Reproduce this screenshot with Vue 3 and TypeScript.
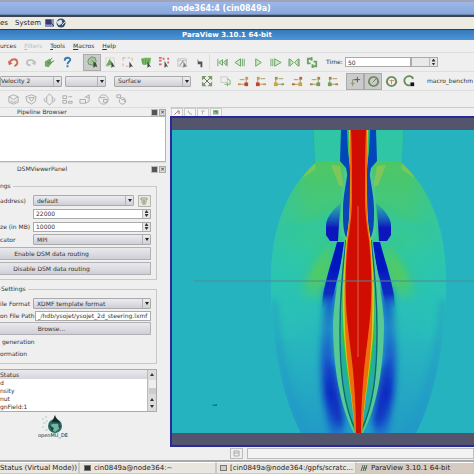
<script setup lang="ts">
import { ref } from 'vue'

interface Shape { d: string; f?: string; s?: string; w?: number }
interface Tool { name: string; shapes: Shape[]; on?: boolean; gap?: boolean }

const green = '#69a463'
const grey = '#aaaaaa'
const dark = '#444444'

const mainTools: Tool[] = [
  { name: 'Undo', shapes: [{ d: 'M3 8C3 3 10 2 11 6c1 3-1 4-3 5', s: '#d0694c', w: 2 }, { d: 'M1 5l1 5 4-2z', f: '#d0694c' }] },
  { name: 'Redo', shapes: [{ d: 'M10 8C10 3 3 3 2 7c0 2 2 3 4 3', s: '#bcc2bc', w: 2 }, { d: 'M12 5l-1 5-4-2z', f: '#bcc2bc' }] },
  { name: 'Connect', shapes: [{ d: 'M2 6l5-3 3 4-4 5-4-1z', f: '#74a868' }, { d: 'M7 5l3-3M9 7l3-2M5 7l3 1', s: '#4d8445' }] },
  { name: 'Help', shapes: [{ d: 'M4 5c0-4 6-4 6-1 0 2-3 2-3 5M7 10v2', s: '#3a7aab', w: 2 }] },
  { name: 'Find', on: true, gap: true, shapes: [{ d: 'M3 3l3-2 4 1 1 4-3 4-5-1-1-3z', f: '#a5c89d', s: '#5f9a5a' }, { d: 'M6 4l2 3', s: '#5f9a5a' }, { d: 'M8 6v7l2-2 2 1-1-4z', f: dark }] },
  { name: 'Select surface', shapes: [{ d: 'M2 2h9v9h-9z', s: '#d4d8cf' }, { d: 'M2 11l4-8 4 6z', f: '#72a960' }, { d: 'M8 6v7l2-2 2 1z', f: dark }] },
  { name: 'Select points', shapes: [{ d: 'M1 2h3M6 2h3M1 2v3M1 8v3M4 11h3M11 2v3', s: '#d5a99b' }, { d: 'M8 6v7l2-2 2 1z', f: dark }] },
  { name: 'Select through', shapes: [{ d: 'M1 3l4-1 7 0-1 6-7 2-2-3z', f: '#77b866' }, { d: 'M3 3v6M6 3v6M9 3v5', s: '#4f994a' }, { d: 'M8 6v7l2-2 2 1z', f: dark }] },
  { name: 'Select frustum points', shapes: [{ d: 'M1 2h3M1 5h3M1 9h3M5 3h2M11 2v2M11 6v2', s: '#d76b70', w: 2 }, { d: 'M7 5v8l2-2 2 1z', f: '#555' }] },
  { name: 'Select block', shapes: [{ d: 'M2 3h9v8H2zM2 5h9', s: '#bdc3bd' }, { d: 'M4 10l4-5', s: '#777' }, { d: 'M8 6v7l2-2 2 1z', f: '#777' }] },
  { name: 'Interact', shapes: [{ d: 'M4 3l1 3 4 0 0 6-2 0 0-3-3 0z', f: '#555' }] },
]

const play: Tool[] = [
  { name: 'First frame', shapes: [{ d: 'M2 3v8M12 3v8M3 7l4-3v6zM8 7l3-3v6z', s: green, f: '#cfe6c7' }] },
  { name: 'Previous frame', shapes: [{ d: 'M1 7l6-4v8zM9 3v8M11 3v8', s: green, f: '#cfe6c7' }] },
  { name: 'Play', shapes: [{ d: 'M4 3l6 4-6 4z', s: green, f: '#cfe6c7' }] },
  { name: 'Next frame', shapes: [{ d: 'M5 3l7 4-7 4zM3 3v8M1 3v8', s: green, f: '#cfe6c7' }] },
  { name: 'Last frame', shapes: [{ d: 'M2 3l4 4-4 4zM11 3l-4 4 4 4zM12 3v8M1 3v8', s: green, f: '#cfe6c7' }] },
  { name: 'Loop', shapes: [{ d: 'M5 3H2v5h3M8 11h3V6H8M6 1v4M7 9v4', s: green, w: 2 }] },
]

function axis(a: string, b: string, flip: boolean): Shape[] {
  return flip
    ? [{ d: 'M3 4v6h7M6 4h5', s: '#a29a5f' }, { d: 'M1 8h4v4H1z', f: b }, { d: 'M2 2h3v3H2z', f: a }, { d: 'M9 9h3v2H9z', f: a }]
    : [{ d: 'M10 3v7H3M3 5h5', s: '#a29a5f' }, { d: 'M8 8h4v4H8z', f: b }, { d: 'M9 2h3v3H9z', f: a }, { d: 'M1 9h3v2H1z', f: a }]
}

const camera: Tool[] = [
  { name: 'Reset camera', shapes: [{ d: 'M2 2l9 9M11 2l-9 9', s: '#666' }, { d: 'M1 1h5L1 6zM12 1v5L7 1zM1 12V7l5 5zM12 12H7l5-5z', f: '#7c9b61' }] },
  { name: 'Zoom to box', shapes: [{ d: 'M2 2h7v6H2z', s: '#c5cdc1' }, { d: 'M9 4l3 2v4H6M9 8v4', s: '#6eb466' }] },
  { name: 'View +X', shapes: axis('#c99a48', '#c4452c', false) },
  { name: 'View -X', shapes: axis('#c99a48', '#c4452c', true) },
  { name: 'View +Y', shapes: axis('#7fa44c', '#c8a63e', true) },
  { name: 'View -Y', shapes: axis('#c65e38', '#c8a63e', false) },
  { name: 'View +Z', shapes: axis('#b5803c', '#6f9f50', false) },
  { name: 'View -Z', shapes: axis('#b5803c', '#6f9f50', true) },
]

const centre: Tool[] = [
  { name: 'Orientation axes', on: true, shapes: [{ d: 'M4 12V5h5M2 9h4', s: '#8d925c' }, { d: 'M9 2v6M6 5h6', s: '#555' }] },
  { name: 'Rotation centre', on: true, shapes: [{ d: 'M7 2a5 5 0 1 0 .1 0', s: '#718c60', w: 2 }, { d: 'M6 8l4-4', s: '#62804f' }] },
  { name: 'Reset centre', shapes: [{ d: 'M7 2a5 5 0 1 0 .1 0', s: '#6c8958', w: 2 }, { d: 'M5 6h5M7 5v5', s: '#b3955b' }] },
  { name: 'Pick centre', shapes: [{ d: 'M11 4a5 5 0 1 0-3 7', s: '#688e54', w: 2 }, { d: 'M8 8h4v4H8z', f: '#111' }] },
]

const filters: Tool[] = [
  { name: 'Contour', shapes: [{ d: 'M2 4l5-2 5 2v6l-5 2-5-2zM2 4l5 3 5-3M4 8a3 2 0 0 0 6 0', s: grey }] },
  { name: 'Clip', shapes: [{ d: 'M1 4l6-2 5 2-1 5-4 3-5-3zM4 5l3 4 3-4z', s: grey }] },
  { name: 'Slice', shapes: [{ d: 'M7 1l3 3v6l-3 3-3-3V4zM3 5L1 7l2 3M11 5l2 2-2 3', s: grey }] },
  { name: 'Threshold', shapes: [{ d: 'M2 3h4v3H2zM2 8h4v3H2zM8 4h4M8 9h4v2H8z', s: grey }] },
  { name: 'Extract subset', shapes: [{ d: 'M1 7h6v4H1zM6 5l5-3v7l-4 2M8 5h3', s: grey }] },
  { name: 'Glyph', shapes: [{ d: 'M7 2a5 5 0 1 0 .1 0M3 5h6M7 7h4v3H7z', s: grey }] },
  { name: 'Stream tracer', shapes: [{ d: 'M2 2h4v3H2zM8 5a3.500 3.500 0 1 0 .1 0M7 7h3v3', s: grey }] },
]

const tabs: Tool[] = [
  { name: 'Edit view', shapes: [{ d: 'M2 11l4-4 5-4v7', s: '#a0705f', w: 2 }] },
  { name: 'Camera', shapes: [{ d: 'M3 3l2 5 6 3', s: '#b4aaa4', w: 2 }] },
  { name: 'Split view', shapes: [{ d: 'M3 4h8M6 4v7', s: '#b0b4a6', w: 2 }] },
  { name: '3D view', shapes: [{ d: 'M1 2h11v9H1z', f: '#8fb48a' }, { d: 'M4 5h5v4', s: '#557f54', w: 2 }] },
]

const address = ref('default')
const port = ref('22000')
const size = ref('10000')
const comm = ref('MPI')
const format = ref('XDMF template format')
const path = ref('_/hdb/ysojet/ysojet_2d_steering.lxmf')
const time = ref('50')
const statusRows = ['d', 'nsity', 'nut', 'gnField:1']
</script>

<template>
  <div class="desktop">
    <div class="strip"></div>
    <header class="vnc-title">node364:4 (cin0849a)</header>
    <nav class="gnome">
      <a href="#">es</a><a href="#">System</a>
      <svg class="tray" viewBox="0 0 24 10" aria-hidden="true">
        <path d="M1 1h9v8H1z" fill="#8d95c2" /><path d="M2 2h5v4H2zM6 4l4 4" fill="#363c69" stroke="#363c69" />
        <circle cx="17" cy="5" r="4.500" fill="#39506f" /><path d="M13 4l4-2 1 3-3 2zM18 7l3-3" fill="#dce5f3" stroke="#dce5f3" />
      </svg>
    </nav>
    <header class="pv-title">ParaView 3.10.1 64-bit</header>
    <nav class="menu">
      <a href="#">urces</a><a href="#" class="off"><u>F</u>ilters</a><a href="#"><u>T</u>ools</a><a href="#"><u>M</u>acros</a><a href="#"><u>H</u>elp</a>
    </nav>

    <div class="bar first">
      <button v-for="t in mainTools" :key="t.name" class="tool" :class="{ on: t.on, gap: t.gap }" :aria-label="t.name">
        <svg viewBox="0 0 14 14"><path v-for="(p, i) in t.shapes" :key="i" :d="p.d" :fill="p.f || 'none'" :stroke="p.s || 'none'" :stroke-width="p.w || 1" /></svg>
      </button>
      <span class="sep"></span>
      <button v-for="t in play" :key="t.name" class="tool" :aria-label="t.name">
        <svg viewBox="0 0 14 14"><path v-for="(p, i) in t.shapes" :key="i" :d="p.d" :fill="p.f || 'none'" :stroke="p.s || 'none'" :stroke-width="p.w || 1" /></svg>
      </button>
      <label class="time" for="time">Time:</label>
      <input id="time" v-model="time" class="time-box">
      <div class="frame"><span class="spin"><i class="up"></i><i class="down"></i></span></div>
    </div>

    <div class="bar second">
      <div class="combo velocity"><select aria-label="Colour array"><option>Velocity 2</option></select><i class="arrow"></i></div>
      <div class="combo component"><select aria-label="Component"><option></option></select><i class="arrow"></i></div>
      <div class="combo surface"><select aria-label="Representation"><option>Surface</option></select><i class="arrow"></i></div>
      <div class="tools">
        <button v-for="t in camera" :key="t.name" class="tool" :aria-label="t.name">
          <svg viewBox="0 0 14 14"><path v-for="(p, i) in t.shapes" :key="i" :d="p.d" :fill="p.f || 'none'" :stroke="p.s || 'none'" :stroke-width="p.w || 1" /></svg>
        </button>
      </div>
      <div class="tools near">
        <button v-for="t in centre" :key="t.name" class="tool" :class="{ on: t.on }" :aria-label="t.name">
          <svg viewBox="0 0 14 14"><path v-for="(p, i) in t.shapes" :key="i" :d="p.d" :fill="p.f || 'none'" :stroke="p.s || 'none'" :stroke-width="p.w || 1" /></svg>
        </button>
      </div>
      <button class="macro">macro_benchm</button>
    </div>

    <div class="bar third">
      <button v-for="t in filters" :key="t.name" class="tool" :aria-label="t.name">
        <svg viewBox="0 0 14 14"><path v-for="(p, i) in t.shapes" :key="i" :d="p.d" :fill="p.f || 'none'" :stroke="p.s || 'none'" :stroke-width="p.w || 1" /></svg>
      </button>
    </div>

    <main class="work">
      <aside class="side">
        <div class="dock"><h2>Pipeline Browser</h2><button class="mini float" aria-label="Float pipeline browser"></button><button class="mini" aria-label="Close pipeline browser">×</button></div>
        <div class="pipeline"></div>
        <div class="dock tall"><h2>DSMViewerPanel</h2><button class="mini float" aria-label="Float panel"></button><button class="mini" aria-label="Close panel">×</button></div>

        <section class="group">
          <h3>ngs</h3>
          <div class="row"><label for="addr">address)</label><div class="combo"><select id="addr" v-model="address"><option>default</option></select><i class="arrow"></i></div>
            <button class="server" aria-label="Add server"><svg viewBox="0 0 10 10"><path d="M2 2h6v2H2zM2 6h6M3 8h4M5 4v4" fill="none" stroke="#999985" /></svg></button></div>
          <div class="row"><label for="port"></label><div class="num"><input id="port" v-model="port" aria-label="Port"><span class="spin"><i class="up"></i><i class="down"></i></span></div></div>
          <div class="row"><label for="size">ze (in MB)</label><div class="num"><input id="size" v-model="size"><span class="spin"><i class="up"></i><i class="down"></i></span></div></div>
          <div class="row"><label for="comm">cator</label><div class="combo"><select id="comm" v-model="comm"><option>MPI</option></select><i class="arrow"></i></div></div>
          <button class="wide">Enable DSM data routing</button>
          <button class="wide">Disable DSM data routing</button>
        </section>

        <section class="group settings">
          <h3>Settings</h3>
          <div class="row"><label for="fmt">ile Format</label><div class="combo"><select id="fmt" v-model="format"><option>XDMF template format</option></select><i class="arrow"></i></div></div>
          <div class="row"><label for="path">on File Path</label><div class="num"><input id="path" v-model="path"></div></div>
          <button class="wide">Browse...</button>
          <p>generation</p>
          <p class="flush">ormation</p>
        </section>

        <div class="status">
          <table>
            <thead><tr><th>Status</th></tr></thead>
            <tbody><tr v-for="r in statusRows" :key="r"><td>{{ r }}</td></tr></tbody>
          </table>
          <div class="scroll"><i class="up"></i><b></b><i class="up"></i><i class="down"></i></div>
        </div>

        <div class="logo">
          <svg viewBox="0 0 26 18" aria-hidden="true">
            <circle cx="15" cy="11" r="7" fill="#2d6e66" />
            <path d="M9 8c4 0 4-4 6-8 1 4 5 6 5 9-4-3-8-1-11-1z" fill="#15282b" />
            <path d="M12 9l7 0 1 4-5 4-5-4z" fill="#74b5a3" /><path d="M9 10l5 3-2 4zM18 8l3 3-2 3z" fill="#1c4a43" />
            <path d="M2 4h2M5 2h2M3 8h3M2 12h2M5 15h3M6 6h2" stroke="#a5d3c7" />
          </svg>
          <span>openMU_DE</span>
        </div>
      </aside>

      <section class="view">
        <div class="tabs">
          <button v-for="t in tabs" :key="t.name" class="tab" :aria-label="t.name">
            <svg viewBox="0 0 14 14"><path v-for="(p, i) in t.shapes" :key="i" :d="p.d" :fill="p.f || 'none'" :stroke="p.s || 'none'" :stroke-width="p.w || 1" /></svg>
          </button>
        </div>
        <div class="render">
          <svg viewBox="172 130 302 303" role="img" aria-label="Velocity field of the jet">
            <defs>
              <linearGradient id="dome" gradientUnits="userSpaceOnUse" x1="0" y1="160" x2="0" y2="433">
                <stop offset="0" stop-color="#4fc662" /><stop offset=".2" stop-color="#40c882" /><stop offset=".36" stop-color="#2fc8a4" />
                <stop offset=".5" stop-color="#29c3b6" /><stop offset=".7" stop-color="#27b4bf" /><stop offset="1" stop-color="#229bc7" />
              </linearGradient>
              <linearGradient id="edge" gradientUnits="userSpaceOnUse" x1="270" y1="0" x2="310" y2="0">
                <stop offset="0" stop-color="#2ac3b6" stop-opacity=".6" /><stop offset="1" stop-color="#2ac3b6" stop-opacity="0" />
              </linearGradient>
              <linearGradient id="wake" gradientUnits="userSpaceOnUse" x1="0" y1="285" x2="0" y2="430">
                <stop offset="0" stop-color="#0c34c8" stop-opacity=".8" /><stop offset=".3" stop-color="#1a72cc" stop-opacity=".75" />
                <stop offset=".5" stop-color="#1a5ccc" /><stop offset=".75" stop-color="#0b2cc4" /><stop offset="1" stop-color="#1b70cc" />
              </linearGradient>
              <linearGradient id="blob" gradientUnits="userSpaceOnUse" x1="0" y1="204" x2="0" y2="228">
                <stop offset="0" stop-color="#1e8fd0" stop-opacity=".5" /><stop offset="1" stop-color="#0715bd" />
              </linearGradient>
              <linearGradient id="arm" gradientUnits="userSpaceOnUse" x1="0" y1="270" x2="0" y2="310">
                <stop offset="0" stop-color="#0619be" /><stop offset=".6" stop-color="#0a2cc4" /><stop offset="1" stop-color="#1a72cc" stop-opacity="0" />
              </linearGradient>
              <filter id="b1"><feGaussianBlur stdDeviation=".7" /></filter>
              <filter id="b2" x="-50%" y="-50%" width="200%" height="200%"><feGaussianBlur stdDeviation="3" /></filter>
              <filter id="b3" x="-80%" y="-80%" width="260%" height="260%"><feGaussianBlur stdDeviation="7" /></filter>
              <clipPath id="domeClip"><path d="M314 130h45v303h-58C281 395 270 335 271 279C271 235 283 193 315 163z" /></clipPath>
              <clipPath id="left"><path d="M172 130h187v303H172z" /></clipPath>
              <g id="half" clip-path="url(#left)">
                <g clip-path="url(#domeClip)">
                  <path d="M260 120h100v320h-100z" fill="url(#dome)" />
                  <path d="M313 130h33v31h-33z" fill="#2fc6a6" />
                  <path d="M314 163C283 193 271 235 271 279v60h40V200z" fill="url(#edge)" />
                  <path d="M338 205c-14 10-26 18-48 20l0 8h40z" fill="#2cc6ac" opacity=".45" filter="url(#b2)" />
                  <path d="M334 245c-12 10-24 28-30 50l14 0 14-20z" fill="#58cc58" opacity=".85" filter="url(#b3)" />
                  <path d="M330 246c-9 9-18 22-23 40l14-6z" fill="#58cc58" opacity=".6" filter="url(#b2)" />
                  <path d="M271 300C272 350 285 400 301 433h8C292 390 280 350 277 300z" fill="#2396c9" opacity=".6" filter="url(#b2)" />
                  <path d="M331 165l8 20 5 3-4-22z" fill="#a2c74f" opacity=".6" filter="url(#b1)" />
                  <path d="M315 163l-10 10-2 5 13-9z" fill="#8ecb55" opacity=".6" filter="url(#b1)" />
                </g>
                <path d="M313 130l2 34" stroke="#28a6c6" opacity=".5" />
                <path d="M325 288l12 0-3 42 0 40 8 50 2 16-14 0c-6-30-10-60-9-90z" fill="url(#wake)" filter="url(#b2)" />
                <path d="M330 365l4 0 10 54-3 10-8-12z" fill="#0b22bd" opacity=".7" filter="url(#b2)" />
                <g filter="url(#b1)">
                  <path d="M341 203C331 211 326 219 326 226v9l4 6h8l1-18z" fill="url(#blob)" />
                  <path d="M337 242h7c-2 16-4 28-7 38l-7 30-8-3c1-22 9-42 15-65z" fill="url(#arm)" />
                  <path d="M345 240C342 262 335 290 333 322c0 45 7 85 21 111h7V240z" fill="#56c996" />
                  <path d="M345 165c-2 18-4 32-4 45v25l6 8h8v-78z" fill="#48ca94" />
                  <path d="M341 130h7c-1 15 0 22 2 36l-2 12-2-10-6-7z" fill="#0646b9" />
                  <path d="M348 164c0 14-5 29-5 46 0 12 0 22 4 29l4-15 0-30 1-26z" fill="#0745b8" />
                  <path d="M347 130h12v303h-4C345 408 341 375 341 335c0-35 3-65 5-95 5-20 4-45 4-70z" fill="#2abf64" />
                  <path d="M341 345c1 34 6 62 14 82l1-25-9-57z" fill="#25a8b9" opacity=".8" />
                  <path d="M346 240C343 265 340 300 340 330c0 40 3 75 16 101" fill="none" stroke="#08677b" stroke-width="1.400" />
                  <path d="M343 320c0 35 3 60 12 90l-1-45-7-60z" fill="#22c744" />
                  <path d="M349 130h10v303h-4C352 395 344 355 343 318c-1-28 1-50 3-78 4-18 4-35 4-70z" fill="#c9ca27" />
                  <path d="M350 130h9v303h-4c-2-38-10-75-10-113-1-30 0-54 2-80 3-20 4-35 3-70z" fill="#ee6d0b" />
                  <path d="M351 130h8v303h-3c0-20-1-40-3-63-2-20-6-45-7-67-1-22 0-43 2-63 3-18 4-30 4-40 0-20 0-50-1-70z" fill="#cf0c00" />
                </g>
              </g>
            </defs>
            <g><use href="#half" /><use href="#half" transform="translate(717 0) scale(-1 1)" /></g>
            <path d="M358 206v151" stroke="#e6604a" />
            <path d="M194 281h280" stroke="#4e8b91" />
            <path d="M212 405l5-1v2h-4z" fill="#167b6d" />
          </svg>
        </div>
        <div class="hscroll"><button aria-label="Scroll left"><svg viewBox="0 0 7 7"><path d="M1 1h5v5H1zM1 3h5" fill="none" stroke="#aaa" /></svg></button><span></span></div>
      </section>
    </main>

    <footer class="tasks">
      <button class="t1">Status (Virtual Mode))</button>
      <button class="t2"><i class="term"></i>cin0849a@node364:~</button>
      <button class="t3"><i class="term pale"></i>[cin0849a@node364:/gpfs/scratc...</button>
      <button class="t4"><svg viewBox="0 0 8 6" aria-hidden="true"><path d="M1 6l2-6M3 6l2-6M5 6l2-6M3 3h4" stroke="#46695b" fill="none" /></svg>ParaView 3.10.1 64-bit</button>
    </footer>
  </div>
</template>

<style>
body { background: #efefef; overflow: hidden; }
</style>

<style scoped>
.desktop { min-height: 100vh; display: flex; flex-direction: column; background: #efefef; color: #333; font: 6px/8px "DejaVu Sans", sans-serif; overflow: hidden; }
.desktop * { box-sizing: border-box; }
button, input, select { font: inherit; color: inherit; padding: 0; margin: 0; border: 0; background: none; min-width: 0; border-radius: 0; outline: 0; }
select { appearance: none; width: 100%; height: 100%; padding-left: 3px; }
a { color: inherit; text-decoration: none; }
h2, h3, p { margin: 0; font: inherit; }
.strip { height: 2px; background: #a3a3b7; }
.vnc-title { height: 13px; padding-left: 172px; background: linear-gradient(#9db8e7, #86a6dc); color: #fff; font-size: 8px; line-height: 13px; font-weight: bold; white-space: nowrap; border-bottom: 1px solid #7189b1; }
.gnome { display: flex; align-items: center; gap: 7px; height: 14px; background: #eeebe3; border-top: 2px solid #3b4551; color: #222; font-size: 7px; }
.tray { width: 24px; height: 10px; margin-left: -4px; }
.pv-title { height: 11px; padding-left: 182px; border-top: 1px solid #294158; background: linear-gradient(#3578bb, #4b96d7); color: #fff; font-size: 7px; line-height: 10px; font-weight: bold; white-space: nowrap; }
.menu { display: flex; align-items: center; gap: 8px; height: 12px; }
.menu .off { color: #bbb; }
.bar { display: flex; align-items: center; border-top: 1px solid #dedede; height: 19px; white-space: nowrap; overflow: hidden; }
.first { padding-left: 4px; }
.third { padding-left: 4px; height: 17px; }
.tool { display: grid; place-items: center; flex: 0 0 auto; width: 18px; height: 17px; }
.tool svg { width: 13px; height: 13px; }
.tool.on { background: #cbcbcb; border: 1px solid #aaa; }
.tool.gap { margin-left: 7px; }
.sep { width: 4px; height: 16px; border-left: 1px solid #ddd; }
.time { margin-left: 5px; width: 19px; }
.time-box { width: 66px; height: 10px; padding-left: 2px; background: #fff; border: 1px solid #aaa; }
.frame { display: flex; justify-content: flex-end; width: 27px; height: 10px; border: 1px solid #aaa; background: #e9e9e9; }
.combo { position: relative; flex: 1; height: 11px; min-width: 0; border: 1px solid #aaa; border-radius: 1px; background: linear-gradient(#ececf0, #cfcfd8); }
.arrow { position: absolute; right: 0; top: 0; width: 8px; height: 100%; border-left: 1px solid #b4b4b4; pointer-events: none; }
.arrow::after { content: ""; position: absolute; left: 2px; top: 3px; border: 2px solid transparent; border-top: 3px solid #222; border-bottom: 0; }
.velocity { flex: 0 0 62px; }
.velocity select { padding-left: 0; }
.component { flex: 0 0 41px; margin-left: 3px; }
.surface { flex: 0 0 77px; margin-left: 8px; }
.tools { display: flex; margin-left: 7px; }
.near { margin-left: 4px; }
.macro { margin-left: 9px; }
.work { flex: 1; display: flex; }
.side { flex: 0 0 170px; padding-right: 4px; overflow: hidden; }
.dock { display: flex; align-items: center; gap: 1px; height: 9px; padding-left: 17px; border-top: 1px solid #ddd; }
.dock h2 { flex: 1; }
.tall { height: 13px; }
.mini { width: 7px; height: 7px; border: 1px solid #aaa; background: #ddd; line-height: 4px; color: #222; }
.float { background: #555; border-color: #bbb; }
.pipeline { height: 46px; background: #fff; border: 1px solid #b4b4b4; border-left: 0; }
.group { position: relative; display: flex; flex-direction: column; gap: 2px; margin: 11px 9px 0 0; padding: 8px 5px 4px 0; border: 1px solid #c8c8c8; border-left: 0; }
.group h3 { position: absolute; left: 0; top: -5px; padding-right: 2px; background: #efefef; }
.settings { margin-top: 9px; padding-top: 8px; gap: 1px; }
.settings h3 { left: 1px; }
.row { display: flex; align-items: center; height: 11px; }
.row label { flex: 0 0 33px; white-space: nowrap; }
.num { flex: 1; display: flex; height: 10px; min-width: 0; background: #fff; border: 1px solid #aaa; }
.num input { flex: 1; padding-left: 2px; }
.spin { display: flex; flex-direction: column; justify-content: space-around; align-items: center; width: 8px; background: #e6e6e6; border-left: 1px solid #bbb; }
.up, .down { width: 4px; height: 3px; background: #333; clip-path: polygon(50% 0, 100% 100%, 0 100%); }
.down { clip-path: polygon(0 0, 100% 0, 50% 100%); }
.server { width: 13px; height: 12px; margin-left: 4px; border: 1px solid #b5b5a9; background: #e9e9e2; }
.server svg { display: block; width: 10px; height: 10px; }
.wide { height: 13px; border: 1px solid #b1b1b5; border-left: 0; background: linear-gradient(#e9e9ed, #cfcfd7); padding-right: 47px; text-align: center; }
.group p { height: 11px; line-height: 11px; padding-left: 2px; }
.group .flush { padding-left: 0; }
.status { display: flex; height: 43px; margin: 5px 9px 0 0; border: 1px solid #aaa; border-left: 0; background: #fff; }
table { flex: 1; border-collapse: collapse; }
th, td { padding: 0; height: 8px; line-height: 8px; text-align: left; font-weight: normal; }
th { height: 9px; background: linear-gradient(#eaeaee, #d4d4da); }
.scroll { display: flex; flex-direction: column; align-items: center; gap: 4px; padding: 3px 0; width: 9px; border-left: 1px solid #bbb; background: #dcdcdc; }
.scroll b { flex: 1; width: 7px; background: linear-gradient(#efefef 60%, #ccc 60%); }
.logo { display: flex; flex-direction: column; align-items: center; width: 28px; margin: 3px 0 0 39px; line-height: 5px; color: #222; }
.logo svg { width: 26px; height: 18px; }
.logo span { font-size: 5px; }
.view { flex: 1; display: flex; flex-direction: column; min-width: 0; }
.tabs { display: flex; gap: 1px; height: 9px; border-top: 1px solid #ccc; padding-left: 1px; }
.tab { display: grid; place-items: center; width: 12px; height: 8px; border: 1px solid #ccc; border-bottom: 0; background: #f6f6f6; }
.tab svg { display: block; width: 8px; height: 7px; }
.render { flex: 1; display: flex; border: 2px solid #29299b; border-right: 0; padding: 12px 0; background: #53556c; }
.render svg { display: block; width: 100%; background: #25b4bf; }
.hscroll { display: flex; gap: 4px; height: 13px; padding: 1px 0 1px 60px; }
.hscroll button { display: grid; place-items: center; width: 13px; border: 1px solid #bbb; }
.hscroll svg { width: 7px; height: 7px; }
.hscroll span { flex: 1; border: 1px solid #bbb; background: #f3f3f3; }
.tasks { display: flex; height: 14px; border-top: 2px solid #aaa; background: #e9e5df; font-size: 7px; color: #222; white-space: nowrap; }
.tasks button { display: flex; align-items: center; gap: 3px; border: 1px solid #ccc8c1; border-top-color: #fff; text-align: left; }
.tasks .t1 { flex: 1 1 79px; border-left: 0; }
.t2 { flex: 1 1 137px; padding-left: 4px; }
.t3 { flex: 1 1 140px; padding-left: 3px; }
.tasks .t4 { flex: 1 1 118px; padding-left: 3px; background: #d6cbc0; }
.tasks .t4 svg { width: 8px; height: 6px; }
.term { flex: 0 0 auto; width: 7px; height: 6px; border: 1px solid #777; background: #333; }
.pale { background: #ccc; }
</style>
